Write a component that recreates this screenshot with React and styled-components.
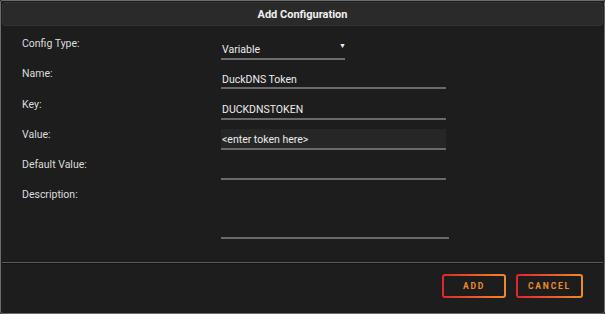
import React, { useState } from "react";
import styled, { createGlobalStyle } from "styled-components";

const GlobalStyle = createGlobalStyle`
  html, body {
    margin: 0;
    padding: 0;
    background: #1d1d1d;
  }
  * {
    box-sizing: border-box;
  }
`;

const App = () => {
  const [values, setValues] = useState({
    configType: "Variable",
    name: "DuckDNS Token",
    key: "DUCKDNSTOKEN",
    value: "<enter token here>",
    defaultValue: "",
    description: "",
  });

  const handleChange = (field) => (e) => {
    setValues({ ...values, [field]: e.target.value });
  };

  return (
    <Frame>
      <GlobalStyle />
      <Header>
        <Title>Add Configuration</Title>
      </Header>
      <Form>
        <Label>Config Type:</Label>
        <SelectWrap>
          <Select value={values.configType} onChange={handleChange("configType")}>
            <option>Variable</option>
            <option>Path</option>
            <option>Port</option>
            <option>Device</option>
          </Select>
          <Arrow>▼</Arrow>
        </SelectWrap>

        <Label>Name:</Label>
        <Input value={values.name} onChange={handleChange("name")} />

        <Label>Key:</Label>
        <Input value={values.key} onChange={handleChange("key")} />

        <Label>Value:</Label>
        <Input filled value={values.value} onChange={handleChange("value")} />

        <Label>Default Value:</Label>
        <Input value={values.defaultValue} onChange={handleChange("defaultValue")} />

        <Label>Description:</Label>
        <TextArea value={values.description} onChange={handleChange("description")} />
      </Form>
      <Divider />
      <Footer>
        <Button>ADD</Button>
        <Button>CANCEL</Button>
      </Footer>
    </Frame>
  );
};

export default App;

const Frame = styled.div`
  height: 314px;
  border: 1px solid #6b6b6b;
  border-radius: 2px;
  padding: 1px;
  display: flex;
  flex-direction: column;
  background: #1d1d1d;
  font-family: Roboto, "Liberation Sans", sans-serif;
`;

const Header = styled.div`
  height: 24px;
  background: #2a2a2a;
  border: 1px solid #323232;
  border-radius: 3px;
  display: flex;
  align-items: center;
  justify-content: center;
`;

const Title = styled.h1`
  margin: 0;
  font-size: 11px;
  font-weight: 700;
  color: #f0f0f0;
`;

const Form = styled.div`
  display: grid;
  grid-template-columns: 199px 225px;
  grid-auto-rows: 21px;
  row-gap: 9.3px;
  padding: 12px 0 0 20px;
`;

const Label = styled.label`
  font-size: 10.5px;
  color: #dcdcdc;
  margin-top: -1px;
`;

const SelectWrap = styled.div`
  position: relative;
  width: 124px;
`;

const Select = styled.select`
  appearance: none;
  width: 100%;
  height: 21px;
  padding: 3px 0 0 1px;
  background: transparent;
  border: none;
  border-bottom: 2px solid #6e6e6e;
  color: #ececec;
  font-family: inherit;
  font-size: 10.5px;
  outline: none;

  option {
    background: #2a2a2a;
  }
`;

const Arrow = styled.span`
  position: absolute;
  right: -1px;
  top: 4px;
  font-size: 7px;
  color: #f0f0f0;
  pointer-events: none;
`;

const Input = styled.input`
  width: 100%;
  height: 21px;
  padding: 3px 0 0 1px;
  background: ${(p) => (p.filled ? "#262626" : "transparent")};
  border: none;
  border-bottom: 2px solid #6a6a6a;
  color: #ececec;
  font-family: inherit;
  font-size: 10.5px;
  outline: none;
`;

const TextArea = styled.textarea`
  width: 228px;
  height: 60px;
  margin-top: -10px;
  resize: none;
  background: transparent;
  border: none;
  border-bottom: 2px solid #6a6a6a;
  color: #ececec;
  font-family: inherit;
  font-size: 10.5px;
  outline: none;
`;

const Divider = styled.div`
  margin-top: auto;
  height: 2px;
  background: #5a5a5a;
  border-bottom: 1px solid #141414;
`;

const Footer = styled.div`
  height: 48px;
  display: flex;
  justify-content: flex-end;
  align-items: flex-start;
  gap: 10px;
  padding: 10px 20px 0 0;
`;

const Button = styled.button`
  height: 24px;
  min-width: 64px;
  padding: 0 10px;
  border: 2px solid transparent;
  border-radius: 3px;
  background: linear-gradient(#1d1d1d, #1d1d1d) padding-box,
    linear-gradient(90deg, #e0262c, #f08a2a) border-box;
  color: #f08c2c;
  font-family: inherit;
  font-size: 8.5px;
  font-weight: 700;
  letter-spacing: 1.8px;
  cursor: pointer;
`;
